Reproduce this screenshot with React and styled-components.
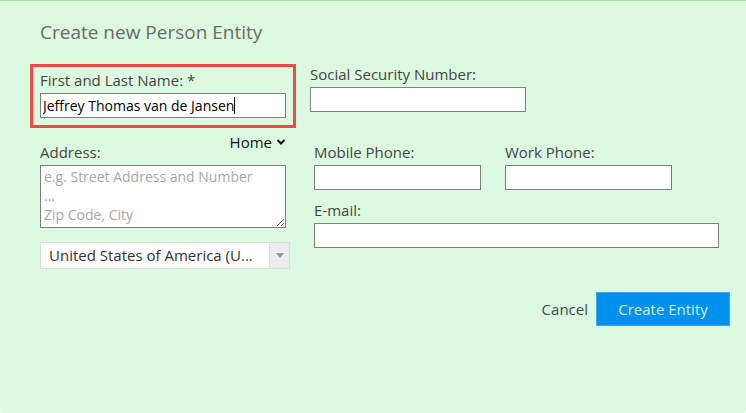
import React from 'react';
import styled, { createGlobalStyle } from 'styled-components';

const GlobalStyle = createGlobalStyle`
  html, body {
    margin: 0;
    padding: 0;
    background: #ffffff;
  }
  * {
    box-sizing: border-box;
  }
`;

const Dialog = styled.div`
  width: 746px;
  height: 413px;
  background: #dcfadf;
  border-top: 1px solid #a7dca2;
  border-radius: 0 0 3px 3px;
  padding: 19px 16px 0 40px;
  font-family: 'Open Sans', 'Noto Sans', sans-serif;
  color: #454545;
`;

const Title = styled.h1`
  margin: 0;
  font-size: 19px;
  font-weight: 400;
  line-height: 24px;
  color: #6a6a6a;
`;

const TopRow = styled.div`
  display: flex;
  align-items: flex-start;
  margin-top: 20px;
`;

const Highlight = styled.div`
  margin-left: -10px;
  border: 3px solid #f84545;
  padding: 3px 7px 7px 7px;
`;

const Field = styled.div`
  display: flex;
  flex-direction: column;
  margin-left: ${(p) => p.$offset || 0}px;
`;

const Label = styled.label`
  font-size: 15px;
  line-height: 20px;
  margin-bottom: 3px;
  color: #454545;
  white-space: nowrap;
`;

const InputWrap = styled.div`
  position: relative;
`;

const Caret = styled.span`
  position: absolute;
  left: ${(p) => p.$x}px;
  top: 4px;
  width: 1px;
  height: 17px;
  background: #000;
`;

const TextInput = styled.input`
  width: ${(p) => p.$w}px;
  height: 25px;
  border: 1px solid #7f7f7f;
  background: #fff;
  padding: 0 2px;
  font-family: 'Open Sans', 'Noto Sans', sans-serif;
  font-size: 14px;
  color: #000;
  outline: none;
  caret-color: transparent;
`;

const BottomRow = styled.div`
  display: flex;
  align-items: flex-start;
  margin-top: 5px;
`;

const LeftCol = styled.div`
  width: 250px;
  display: flex;
  flex-direction: column;
`;

const LabelLine = styled.div`
  width: 246px;
  display: flex;
  justify-content: space-between;
  align-items: flex-start;
`;

const AddressLabel = styled(Label)`
  margin-top: 9px;
`;

const KindPicker = styled.button`
  display: flex;
  align-items: center;
  gap: 4px;
  border: none;
  background: none;
  padding: 0;
  font-family: 'Open Sans', 'Noto Sans', sans-serif;
  font-size: 15px;
  line-height: 18px;
  color: #111;
  cursor: pointer;
`;

const TextArea = styled.textarea`
  width: 246px;
  height: 63px;
  border: 1px solid #7f7f7f;
  background: #fff;
  padding: 1px 3px;
  font-family: 'Open Sans', 'Noto Sans', sans-serif;
  font-size: 14px;
  line-height: 19px;
  color: #000;
  outline: none;
  overflow: hidden;
  &::placeholder {
    color: #a8a8a8;
  }
`;

const Select = styled.div`
  margin-top: 14px;
  width: 250px;
  height: 27px;
  display: flex;
  border: 1px solid #dcdcdc;
  background: #fff;
`;

const SelectValue = styled.div`
  flex: 1;
  padding-left: 8px;
  font-size: 15px;
  line-height: 25px;
  color: #333;
  white-space: nowrap;
  overflow: hidden;
`;

const SelectArrow = styled.div`
  width: 20px;
  border-left: 1px solid #dcdcdc;
  background: #ececec;
  display: flex;
  align-items: center;
  justify-content: center;
`;

const RightCol = styled.div`
  margin-left: 24px;
  display: flex;
  flex-direction: column;
  gap: 10px;
  padding-top: 9px;
`;

const PhoneRow = styled.div`
  display: flex;
  gap: 24px;
`;

const Footer = styled.div`
  display: flex;
  justify-content: flex-end;
  align-items: center;
  gap: 8px;
  margin-top: 23px;
`;

const LinkButton = styled.button`
  border: none;
  background: none;
  padding: 0;
  font-family: 'Open Sans', 'Noto Sans', sans-serif;
  font-size: 15px;
  color: #3c4a5a;
  cursor: pointer;
`;

const PrimaryButton = styled.button`
  width: 134px;
  height: 34px;
  border: 1px solid #3aa9f2;
  background: #0091ee;
  font-family: 'Open Sans', 'Noto Sans', sans-serif;
  font-size: 15px;
  color: #d6f0ff;
  cursor: pointer;
`;

const Chevron = () => (
  <svg width="10" height="8" viewBox="0 0 10 8">
    <path d="M1.5 2 L5 5.5 L8.5 2" fill="none" stroke="#111" strokeWidth="2" />
  </svg>
);

const App = () => {
  return (
    <>
      <GlobalStyle />
      <Dialog>
        <Title>Create new Person Entity</Title>
        <TopRow>
          <Highlight>
            <Field>
              <Label>First and Last Name: *</Label>
              <InputWrap>
                <TextInput $w={246} defaultValue="Jeffrey Thomas van de Jansen" />
                <Caret $x={194} />
              </InputWrap>
            </Field>
          </Highlight>
          <Field $offset={14}>
            <Label>Social Security Number:</Label>
            <TextInput $w={216} />
          </Field>
        </TopRow>
        <BottomRow>
          <LeftCol>
            <LabelLine>
              <AddressLabel>Address:</AddressLabel>
              <KindPicker>
                Home <Chevron />
              </KindPicker>
            </LabelLine>
            <TextArea placeholder={'e.g. Street Address and Number\n...\nZip Code, City'} />
            <Select>
              <SelectValue>United States of America (U...</SelectValue>
              <SelectArrow>
                <svg width="8" height="5" viewBox="0 0 8 5">
                  <path d="M0 0 H8 L4 5 Z" fill="#9a9a9a" />
                </svg>
              </SelectArrow>
            </Select>
          </LeftCol>
          <RightCol>
            <PhoneRow>
              <Field>
                <Label>Mobile Phone:</Label>
                <TextInput $w={167} />
              </Field>
              <Field>
                <Label>Work Phone:</Label>
                <TextInput $w={167} />
              </Field>
            </PhoneRow>
            <Field>
              <Label>E-mail:</Label>
              <TextInput $w={405} />
            </Field>
          </RightCol>
        </BottomRow>
        <Footer>
          <LinkButton>Cancel</LinkButton>
          <PrimaryButton>Create Entity</PrimaryButton>
        </Footer>
      </Dialog>
    </>
  );
};

export default App;
